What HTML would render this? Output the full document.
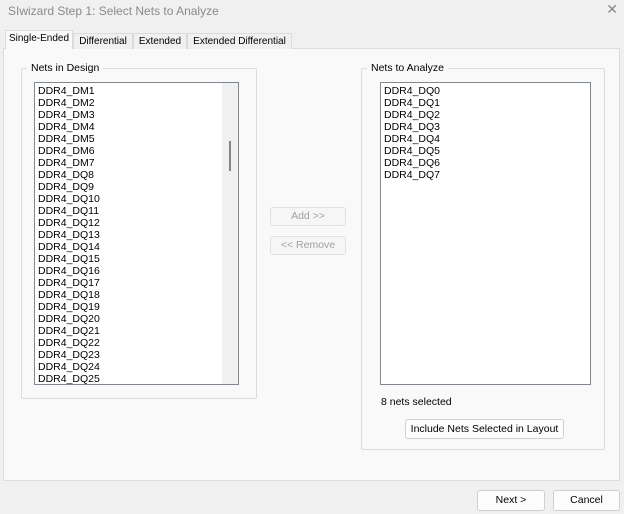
<!DOCTYPE html>
<html><head><style>
*{box-sizing:border-box;margin:0;padding:0}
body{width:624px;height:514px;background:#f0f0f0;font-family:"Liberation Sans",sans-serif;font-size:11px;color:#000;position:relative;overflow:hidden}
.a{position:absolute}
.title{left:8px;top:4px;font-size:12px;color:#8a8a8a}
.x{right:6px;top:1px;font-size:14px;color:#888}
.panel{left:3px;top:48px;width:617px;height:433px;background:#f9f9f9;border:1px solid #dcdcdc}
.tab{top:33px;height:16px;background:#f0f0f0;border:1px solid #dcdcdc;border-bottom:none;padding:2px 0 0;text-align:center;font-size:10px;white-space:nowrap}
.tab.sel{top:30px;height:19px;background:#f9f9f9;z-index:2}
.grp{border:1px solid #dcdcdc;border-radius:2px}
.lbl{background:#f9f9f9;padding:0 4px;font-size:10.5px}
.list{background:#fff;border:1px solid #828790;padding:2px 0 0 3px;line-height:12px;font-size:10.5px;overflow:hidden}
.btn{border:1px solid #d0d0d0;border-radius:3px;background:#fdfdfd;text-align:center;font-size:10.5px}
.dis{color:#a0a0a0;background:#f6f6f6;border-color:#e2e2e2}
</style></head><body>
<div class="a title">SIwizard Step 1: Select Nets to Analyze</div>
<div class="a x">✕</div>
<div class="a panel"></div>
<div class="a tab sel" style="left:5px;width:68px">Single-Ended</div>
<div class="a tab" style="left:73px;width:60px">Differential</div>
<div class="a tab" style="left:133px;width:54px">Extended</div>
<div class="a tab" style="left:187px;width:105px">Extended Differential</div>

<div class="a grp" style="left:21px;top:68px;width:236px;height:331px"></div>
<div class="a lbl" style="left:27px;top:62px">Nets in Design</div>
<div class="a list" style="left:34px;top:82px;width:205px;height:303px">DDR4_DM1<br>DDR4_DM2<br>DDR4_DM3<br>DDR4_DM4<br>DDR4_DM5<br>DDR4_DM6<br>DDR4_DM7<br>DDR4_DQ8<br>DDR4_DQ9<br>DDR4_DQ10<br>DDR4_DQ11<br>DDR4_DQ12<br>DDR4_DQ13<br>DDR4_DQ14<br>DDR4_DQ15<br>DDR4_DQ16<br>DDR4_DQ17<br>DDR4_DQ18<br>DDR4_DQ19<br>DDR4_DQ20<br>DDR4_DQ21<br>DDR4_DQ22<br>DDR4_DQ23<br>DDR4_DQ24<br>DDR4_DQ25</div>
<div class="a" style="left:222px;top:83px;width:16px;height:301px;background:#f0f0f0"></div>
<div class="a" style="left:229px;top:141px;width:2px;height:30px;background:#858585"></div>

<div class="a btn dis" style="left:270px;top:207px;width:76px;height:19px;line-height:17px">Add &gt;&gt;</div>
<div class="a btn dis" style="left:270px;top:236px;width:76px;height:19px;line-height:17px">&lt;&lt; Remove</div>

<div class="a grp" style="left:361px;top:68px;width:244px;height:382px"></div>
<div class="a lbl" style="left:367px;top:62px">Nets to Analyze</div>
<div class="a list" style="left:380px;top:82px;width:211px;height:303px">DDR4_DQ0<br>DDR4_DQ1<br>DDR4_DQ2<br>DDR4_DQ3<br>DDR4_DQ4<br>DDR4_DQ5<br>DDR4_DQ6<br>DDR4_DQ7</div>
<div class="a" style="left:381px;top:396px;font-size:10.5px">8 nets selected</div>
<div class="a btn" style="left:405px;top:419px;width:159px;height:20px;line-height:18px">Include Nets Selected in Layout</div>

<div class="a btn" style="left:477px;top:490px;width:68px;height:21px;line-height:19px">Next &gt;</div>
<div class="a btn" style="left:553px;top:490px;width:67px;height:21px;line-height:19px">Cancel</div>
</body></html>
